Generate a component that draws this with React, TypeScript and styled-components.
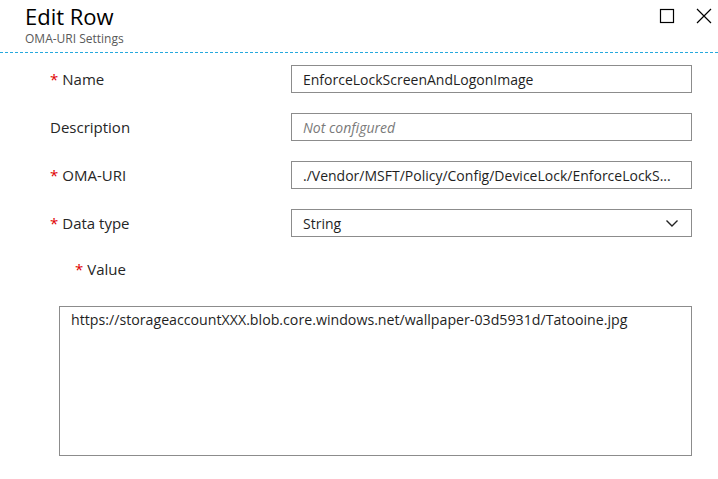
import React from 'react';
import styled, { createGlobalStyle } from 'styled-components';

const GlobalStyle = createGlobalStyle`
  html, body {
    margin: 0;
    padding: 0;
    background: #fff;
    font-family: 'Open Sans', 'Noto Sans', sans-serif;
    color: #212121;
  }
`;

type Field = {
  label: string;
  required?: boolean;
  value?: string;
  placeholder?: string;
  select?: boolean;
};

const fields: Field[] = [
  { label: 'Name', required: true, value: 'EnforceLockScreenAndLogonImage' },
  { label: 'Description', placeholder: 'Not configured' },
  {
    label: 'OMA-URI',
    required: true,
    value: './Vendor/MSFT/Policy/Config/DeviceLock/EnforceLockS...',
  },
  { label: 'Data type', required: true, value: 'String', select: true },
];

const App = () => {
  return (
    <>
      <GlobalStyle />
      <Blade>
        <Header>
          <TitleBlock>
            <Title>Edit Row</Title>
            <Subtitle>OMA-URI Settings</Subtitle>
          </TitleBlock>
          <WindowButtons>
            <IconButton aria-label="Maximize">
              <svg width="16" height="16" viewBox="0 0 16 16">
                <rect x="1.5" y="1.5" width="13" height="13" fill="none" stroke="#000" strokeWidth="1.2" />
              </svg>
            </IconButton>
            <IconButton aria-label="Close">
              <svg width="16" height="16" viewBox="0 0 16 16">
                <path d="M1 1 L15 15 M15 1 L1 15" stroke="#000" strokeWidth="1.2" fill="none" />
              </svg>
            </IconButton>
          </WindowButtons>
        </Header>
        <Form>
          {fields.map((f) => (
            <Row key={f.label}>
              <Label>
                {f.required ? <Star>*</Star> : null}
                {f.label}
              </Label>
              <InputBox>
                {f.value ? (
                  <Value>{f.value}</Value>
                ) : (
                  <Placeholder>{f.placeholder}</Placeholder>
                )}
                {f.select && (
                  <svg width="14" height="14" viewBox="0 0 14 14">
                    <path d="M1.5 4.5 L7 10 L12.5 4.5" stroke="#222" strokeWidth="1.4" fill="none" />
                  </svg>
                )}
              </InputBox>
            </Row>
          ))}
          <ValueLabel>
            <Star>*</Star>Value
          </ValueLabel>
          <TextArea>
            https://storageaccountXXX.blob.core.windows.net/wallpaper-03d5931d/Tatooine.jpg
          </TextArea>
        </Form>
      </Blade>
    </>
  );
};

export default App;

const Blade = styled.div`
  width: 718px;
  height: 479px;
  overflow: hidden;
`;

const Header = styled.div`
  display: flex;
  justify-content: space-between;
  align-items: flex-start;
  padding: 3px 0 0 25px;
  height: 53px;
  border-bottom: 1px dashed #27a9dd;
  box-sizing: border-box;
`;

const TitleBlock = styled.div`
  display: flex;
  flex-direction: column;
`;

const Title = styled.h1`
  margin: 0;
  font-size: 22px;
  font-weight: 400;
  line-height: 26px;
  color: #000;
`;

const Subtitle = styled.div`
  margin-top: 3px;
  font-size: 12px;
  line-height: 14px;
  color: #595959;
`;

const WindowButtons = styled.div`
  display: flex;
  gap: 21px;
  padding: 5px 6px 0 0;
`;

const IconButton = styled.div`
  width: 16px;
  height: 16px;
  display: flex;
`;

const Form = styled.div`
  display: flex;
  flex-direction: column;
  padding: 12px 26px 0 50px;
  gap: 20px;
`;

const Row = styled.div`
  display: grid;
  grid-template-columns: 241px 401px;
  align-items: center;
`;

const Label = styled.div`
  font-size: 15px;
  color: #262626;
  line-height: 28px;
`;

const Star = styled.span`
  color: #e00000;
  margin-right: 4px;
`;

const InputBox = styled.div`
  height: 28px;
  box-sizing: border-box;
  border: 1px solid #8c8c8c;
  display: flex;
  align-items: center;
  justify-content: space-between;
  padding: 0 12px 0 11px;
  font-size: 14px;
  min-width: 0;
`;

const Value = styled.span`
  color: #1f1f1f;
  white-space: nowrap;
`;

const Placeholder = styled.span`
  color: #7a7a7a;
  font-style: italic;
`;

const ValueLabel = styled.div`
  font-size: 15px;
  color: #262626;
  line-height: 28px;
  margin: -2px 0 0 25px;
`;

const TextArea = styled.div`
  margin: 3px 0 0 9px;
  width: 633px;
  height: 150px;
  box-sizing: border-box;
  border: 1px solid #8c8c8c;
  padding: 4px 11px;
  font-size: 14.2px;
  color: #1f1f1f;
  line-height: 18px;
`;
